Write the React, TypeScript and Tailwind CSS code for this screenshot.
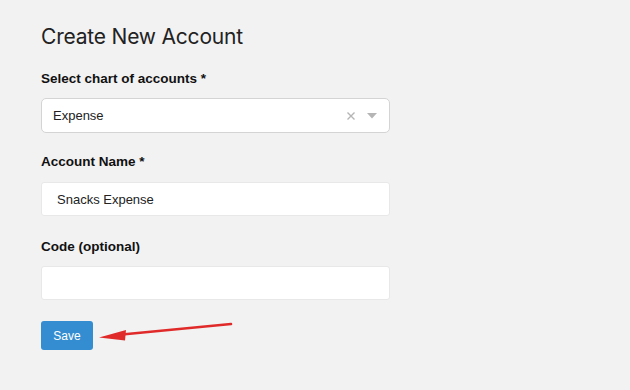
import React from 'react';

function Label({ children }: { children: React.ReactNode }) {
  return <label className="block pt-[1px] text-[13.5px] font-bold leading-[15px] text-[#111]">{children}</label>;
}

export default function App() {
  return (
    <div className="relative min-h-[390px] w-[630px] bg-[#f2f2f2] px-[41px] pt-[24px] font-['Liberation_Sans',Arial,sans-serif]">
      <h1 className="font-['Inter',sans-serif] text-[21px] font-normal leading-[26px] text-[#222] tracking-[-0.2px]">
        Create New Account
      </h1>

      <div className="mt-[20px] w-[349px]">
        <Label>Select chart of accounts *</Label>
        <div className="mt-[12px] flex h-[35px] items-center rounded-[5px] border border-[#d4d4d4] bg-white pl-[11px] pr-[12px]">
          <span className="flex-1 text-[13px] text-[#222]">Expense</span>
          <svg width="10" height="10" viewBox="0 0 10 10" className="mr-[11px]">
            <path d="M1.5 1.5 L8.5 8.5 M8.5 1.5 L1.5 8.5" stroke="#b5b5b5" strokeWidth="1.4" />
          </svg>
          <svg width="10" height="6" viewBox="0 0 10 6">
            <path d="M0 0 H10 L5 5.5 Z" fill="#b5b5b5" />
          </svg>
        </div>

        <div className="mt-[20px]">
          <Label>Account Name *</Label>
          <input
            defaultValue="Snacks Expense"
            className="mt-[13px] block h-[34px] w-full rounded-[3px] border border-[#e8e8e8] bg-white px-[15px] text-[13px] text-[#222] outline-none"
          />
        </div>

        <div className="mt-[22px]">
          <Label>Code (optional)</Label>
          <input className="mt-[12px] block h-[34px] w-full rounded-[3px] border border-[#e8e8e8] bg-white px-[15px] text-[13px] outline-none" />
        </div>

        <button className="mt-[21px] h-[29px] w-[52px] rounded-[3px] bg-[#338dd0] text-[12px] text-white">
          Save
        </button>
      </div>

      <svg className="absolute left-0 top-0 pointer-events-none" width="630" height="390">
        <path d="M231 324 L122 334.5" stroke="#e02a2a" strokeWidth="2.6" strokeLinecap="round" />
        <path d="M99 337.5 L126 330 L125 340.5 Z" fill="#e02a2a" />
      </svg>
    </div>
  );
}
